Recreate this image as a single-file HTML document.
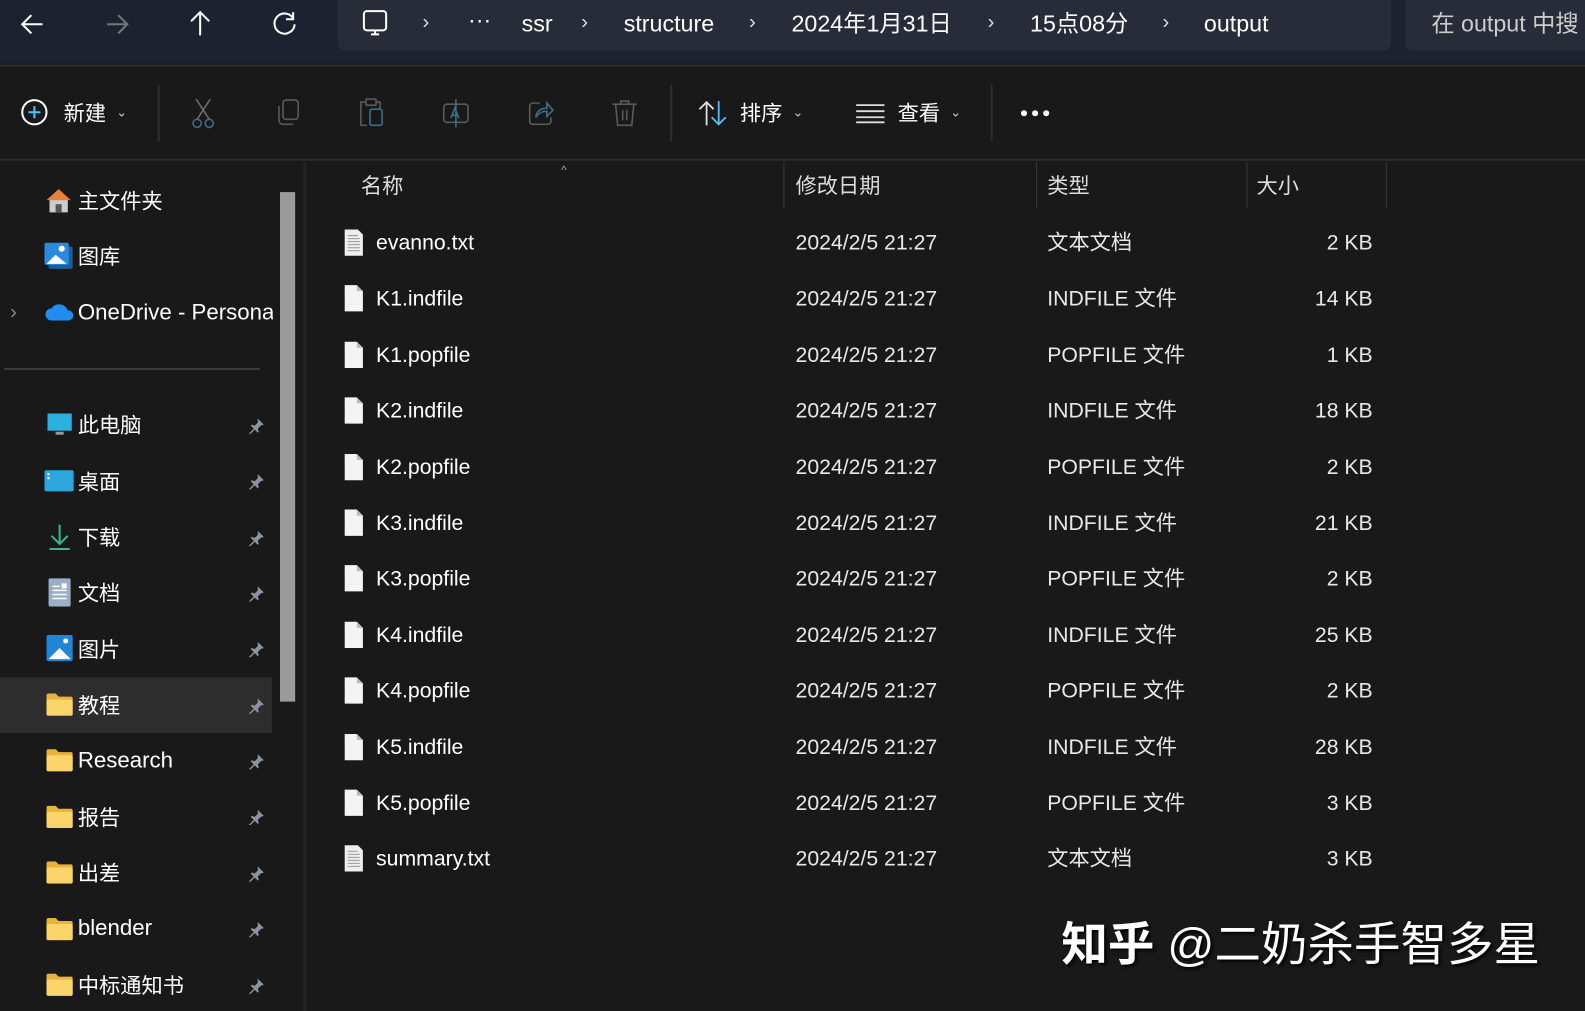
<!DOCTYPE html>
<html><head><meta charset="utf-8"><style>
*{margin:0;padding:0;box-sizing:border-box}
html,body{width:1585px;height:1011px;overflow:hidden;background:#191919}
#w{position:absolute;left:0;top:0;width:1568px;height:1000px;transform:scale(1.01084,1.011);transform-origin:0 0;font-family:"Liberation Sans","Noto Sans CJK SC",sans-serif;color:#fff;background:#191919}
.a{position:absolute;white-space:nowrap;line-height:26px}
.top{position:absolute;left:0;top:0;width:1568px;height:63px;background:#1d2230}
.crumb{position:absolute;left:334px;top:0;width:1042px;height:50px;background:#272c38;border-radius:0 0 8px 8px}
.search{position:absolute;left:1390px;top:0;width:200px;height:50px;background:#272c38;border-radius:0 0 0 8px}
.bc{font-size:23px;top:9px;color:#fff;line-height:28px}
.sep{font-size:20px;top:9px;color:#ddd}
.tb{position:absolute;left:0;top:64px;width:1568px;height:95px;background:#191919;border-top:2px solid #2c2c2c;border-bottom:2px solid #2c2c2c}
.vs{position:absolute;width:2px;background:#2e2e2e}
.side{font-size:21px;color:#fff}
.pin{position:absolute;left:246px;width:16px;height:16px}
.row{font-size:21px;color:#fff}
.dt{font-size:21px;color:#e8e8e8}
.gi{color:#ddd}
</style></head><body><div id="w">
<div class="top"></div>
<div class="crumb"></div>
<div class="search"></div>
<svg class="a" style="left:18px;top:10px" width="28" height="28" viewBox="0 0 28 28" fill="none" stroke="#fff" stroke-width="2"><path d="M24 14H5M13 5l-9 9 9 9"/></svg>
<svg class="a" style="left:102px;top:10px" width="28" height="28" viewBox="0 0 28 28" fill="none" stroke="#777" stroke-width="2"><path d="M4 14h19M15 5l9 9-9 9"/></svg>
<svg class="a" style="left:184px;top:8px" width="28" height="30" viewBox="0 0 28 30" fill="none" stroke="#fff" stroke-width="2"><path d="M14 27V4M5 13l9-9 9 9"/></svg>
<svg class="a" style="left:268px;top:9px" width="28" height="28" viewBox="0 0 28 28" fill="none" stroke="#fff" stroke-width="2"><path d="M22 9a10 10 0 1 0 1.5 6"/><path d="M22 3v7h-7"/></svg>
<svg class="a" style="left:356px;top:8px" width="30" height="30" viewBox="0 0 30 30" fill="none" stroke="#fff" stroke-width="2"><rect x="4" y="3" width="22" height="19" rx="3"/><path d="M11 26h8M15 22v4"/></svg>
<span class="a sep" style="left:418px">›</span>
<span class="a bc" style="left:463px;top:5px">···</span>
<span class="a bc" style="left:516px">ssr</span>
<span class="a sep" style="left:575px">›</span>
<span class="a bc" style="left:617px">structure</span>
<span class="a sep" style="left:741px">›</span>
<span class="a bc" style="left:783px">2024年1月31日</span>
<span class="a sep" style="left:977px">›</span>
<span class="a bc" style="left:1019px">15点08分</span>
<span class="a sep" style="left:1150px">›</span>
<span class="a bc" style="left:1191px">output</span>
<span class="a bc" style="left:1416px;color:#ccc">在 output 中搜</span>
<div class="tb"></div>
<svg class="a" style="left:20px;top:97px" width="28" height="28" viewBox="0 0 28 28" fill="none" stroke-width="2"><circle cx="14" cy="14" r="12" stroke="#fff"/><path d="M14 8v12M8 14h12" stroke="#4cc2ff"/></svg>
<span class="a side" style="left:63px;top:100px">新建</span>
<span class="a" style="left:115px;top:98px;font-size:13px;color:#ccc">⌄</span>
<div class="vs" style="left:156px;top:84px;height:56px"></div>
<svg class="a" style="left:186px;top:96px" width="30" height="32" viewBox="0 0 30 32" fill="none" stroke="#6a6a6a" stroke-width="1.6"><path d="M8 2l13 20M22 2L9 22"/><circle cx="9" cy="26" r="4" stroke="#3e6d87"/><circle cx="21" cy="26" r="4" stroke="#3e6d87"/></svg>
<svg class="a" style="left:270px;top:96px" width="30" height="32" viewBox="0 0 30 32" fill="none" stroke="#5a5a5a" stroke-width="1.6"><rect x="10" y="3" width="15" height="19" rx="3"/><path d="M6 9v14a4 4 0 0 0 4 4h10"/></svg>
<svg class="a" style="left:352px;top:96px" width="30" height="32" viewBox="0 0 30 32" fill="none" stroke="#5a5a5a" stroke-width="1.6"><path d="M9 5H5v23h6"/><path d="M20 5h4v6"/><rect x="10" y="2" width="10" height="6" rx="1"/><rect x="14" y="12" width="12" height="16" rx="2" stroke="#3e6d87"/></svg>
<svg class="a" style="left:436px;top:96px" width="30" height="32" viewBox="0 0 30 32" fill="none" stroke="#5a5a5a" stroke-width="1.6"><rect x="3" y="7" width="24" height="18" rx="3"/><path d="M10 21l4-10 4 10M11 18h6M15 2v28" stroke="#3e6d87"/></svg>
<svg class="a" style="left:520px;top:96px" width="30" height="32" viewBox="0 0 30 32" fill="none" stroke="#5a5a5a" stroke-width="1.6"><path d="M14 6H7a3 3 0 0 0-3 3v15a3 3 0 0 0 3 3h15a3 3 0 0 0 3-3v-4"/><path d="M10 20c1-6 5-9 11-9V6l6 7-6 6v-5c-5 0-8 2-11 6z" stroke="#3e6d87"/></svg>
<svg class="a" style="left:603px;top:96px" width="30" height="32" viewBox="0 0 30 32" fill="none" stroke="#5a5a5a" stroke-width="1.6"><path d="M3 7h24M11 7V4h8v3M6 7l2 21h14l2-21M13 13v10M17 13v10"/></svg>
<div class="vs" style="left:663px;top:84px;height:56px"></div>
<svg class="a" style="left:690px;top:98px" width="32" height="28" viewBox="0 0 32 28" fill="none" stroke-width="1.8"><path d="M9 26V3M2 10l7-7 7 7" stroke="#ddd"/><path d="M21 2v23M14 18l7 7 7-7" stroke="#4cc2ff"/></svg>
<span class="a side" style="left:732px;top:100px">排序</span>
<span class="a" style="left:784px;top:98px;font-size:13px;color:#ccc">⌄</span>
<svg class="a" style="left:846px;top:101px" width="30" height="22" viewBox="0 0 30 22" stroke="#ddd" stroke-width="1.8"><path d="M1 3h28M1 9h28M1 15h28M1 20h28"/></svg>
<span class="a side" style="left:888px;top:100px">查看</span>
<span class="a" style="left:940px;top:98px;font-size:13px;color:#ccc">⌄</span>
<div class="vs" style="left:980px;top:84px;height:56px"></div>
<svg class="a" style="left:1008px;top:107px" width="34" height="10"><circle cx="5" cy="5" r="3" fill="#fff"/><circle cx="16" cy="5" r="3" fill="#fff"/><circle cx="27" cy="5" r="3" fill="#fff"/></svg>
<div class="a" style="left:277px;top:190px;width:15px;height:504px;background:#9a9a9a"></div>
<div class="a" style="left:300px;top:160px;width:3px;height:840px;background:#242424"></div>
<div class="a" style="left:4px;top:364px;width:253px;height:2px;background:#3a3a3a"></div>
<div class="a" style="left:0;top:670px;width:269px;height:55px;background:#2d2d2d"></div>
<svg class="a" style="left:44px;top:185px" width="28" height="26" viewBox="0 0 28 26"><path d="M14 2L2 13h3v12h18V13h3z" fill="#e8803a"/><rect x="5" y="13" width="18" height="12" fill="#ccc"/><rect x="11" y="17" width="6" height="8" fill="#555"/></svg>
<span class="a side" style="left:77px;top:187px">主文件夹</span>
<svg class="a" style="left:44px;top:240px" width="28" height="28" viewBox="0 0 28 28"><rect x="4" y="4" width="24" height="22" rx="2" fill="#1c5d9e"/><rect x="0" y="0" width="24" height="22" rx="2" fill="#2a8ae0"/><path d="M2 21l9-9 11 9z" fill="#fff"/><circle cx="17" cy="6" r="3" fill="#fff"/></svg>
<span class="a side" style="left:77px;top:242px">图库</span>
<span class="a" style="left:10px;top:296px;font-size:20px;color:#888">›</span>
<svg class="a" style="left:44px;top:298px" width="30" height="20" viewBox="0 0 30 20"><path d="M7 19a6 6 0 0 1 0-12 9 9 0 0 1 16 2 5 5 0 0 1 1 10z" fill="#1f8ef0"/></svg>
<span class="a side" style="left:77px;top:296px;width:193px;overflow:hidden;font-size:22px">OneDrive - Personal</span>
<svg class="a" style="left:46px;top:408px" width="26" height="24" viewBox="0 0 26 24"><rect x="1" y="1" width="24" height="17" fill="#2bb0e0"/><rect x="9" y="19" width="8" height="3" fill="#999"/></svg>
<span class="a side" style="left:77px;top:409px">此电脑</span>
<svg class="a" style="left:44px;top:465px" width="29" height="22" viewBox="0 0 29 22"><rect x="0" y="0" width="29" height="21" rx="2" fill="#2ca6dc"/><rect x="3" y="3" width="2" height="2" fill="#fff"/><rect x="3" y="7" width="2" height="2" fill="#fff"/></svg>
<span class="a side" style="left:77px;top:465px">桌面</span>
<svg class="a" style="left:47px;top:518px" width="24" height="26" viewBox="0 0 24 26" fill="none" stroke="#3bb58a" stroke-width="2"><path d="M12 1v18M4 12l8 8 8-8M2 25h20"/></svg>
<span class="a side" style="left:77px;top:520px">下载</span>
<svg class="a" style="left:48px;top:572px" width="22" height="28" viewBox="0 0 22 28"><rect x="0" y="0" width="22" height="28" rx="2" fill="#9aaec8"/><path d="M4 8h7M4 12h14M4 16h14M4 20h14" stroke="#fff" stroke-width="1.5"/><rect x="13" y="5" width="5" height="5" fill="#fff"/></svg>
<span class="a side" style="left:77px;top:575px">文档</span>
<svg class="a" style="left:46px;top:628px" width="26" height="26" viewBox="0 0 26 26"><rect width="26" height="26" rx="2" fill="#1f86d6"/><path d="M2 24l11-11 11 11z" fill="#fff"/><circle cx="19" cy="6" r="2.5" fill="#fff"/></svg>
<span class="a side" style="left:77px;top:631px">图片</span>
<svg width="0" height="0" style="position:absolute"><defs>
<g id="fold"><path d="M0 2a2 2 0 0 1 2-2h7l3 3h12a2 2 0 0 1 2 2v15a2 2 0 0 1-2 2H2a2 2 0 0 1-2-2z" fill="#e8b33a"/><rect x="0" y="6" width="26" height="16" rx="2" fill="#fbd46b"/></g>
<g id="pin"><path d="M9 1l6 6-3 1-3 3 1 3-1 1-3-3-5 5-1-1 5-5-3-3 1-1 3 1 3-3z" fill="#8a94a0"/></g>
<g id="txt"><path d="M1 1h13l5 5v21H1z" fill="#eee"/><path d="M4 7h10M4 10h12M4 13h12M4 16h12M4 19h12M4 22h12" stroke="#999" stroke-width="1"/></g>
<g id="doc"><path d="M1 1h12l6 6v20H1z" fill="#f4f4f4"/><path d="M13 1v6h6z" fill="#bbb"/></g>
</defs></svg>
<svg class="a" style="left:46px;top:686px" width="26" height="22"><use href="#fold"/></svg>
<span class="a side" style="left:77px;top:686px">教程</span>
<svg class="a" style="left:46px;top:741px" width="26" height="22"><use href="#fold"/></svg>
<span class="a side" style="left:77px;top:739px;font-size:22px">Research</span>
<svg class="a" style="left:46px;top:797px" width="26" height="22"><use href="#fold"/></svg>
<span class="a side" style="left:77px;top:797px">报告</span>
<svg class="a" style="left:46px;top:852px" width="26" height="22"><use href="#fold"/></svg>
<span class="a side" style="left:77px;top:852px">出差</span>
<svg class="a" style="left:46px;top:908px" width="26" height="22"><use href="#fold"/></svg>
<span class="a side" style="left:77px;top:905px;font-size:22px">blender</span>
<svg class="a" style="left:46px;top:963px" width="26" height="22"><use href="#fold"/></svg>
<span class="a side" style="left:77px;top:963px">中标通知书</span>
<svg class="pin" style="top:413px"><use href="#pin"/></svg>
<svg class="pin" style="top:468px"><use href="#pin"/></svg>
<svg class="pin" style="top:524px"><use href="#pin"/></svg>
<svg class="pin" style="top:579px"><use href="#pin"/></svg>
<svg class="pin" style="top:634px"><use href="#pin"/></svg>
<svg class="pin" style="top:690px"><use href="#pin"/></svg>
<svg class="pin" style="top:745px"><use href="#pin"/></svg>
<svg class="pin" style="top:800px"><use href="#pin"/></svg>
<svg class="pin" style="top:856px"><use href="#pin"/></svg>
<svg class="pin" style="top:911px"><use href="#pin"/></svg>
<svg class="pin" style="top:967px"><use href="#pin"/></svg>
<span class="a" style="left:555px;top:155px;font-size:12px;color:#aaa">^</span>
<span class="a dt gi" style="left:357px;top:172px">名称</span>
<div class="a" style="left:775px;top:160px;width:1px;height:46px;background:#3a3a3a"></div>
<span class="a dt gi" style="left:787px;top:172px">修改日期</span>
<div class="a" style="left:1025px;top:160px;width:1px;height:46px;background:#3a3a3a"></div>
<span class="a dt gi" style="left:1036px;top:172px">类型</span>
<div class="a" style="left:1233px;top:160px;width:1px;height:46px;background:#3a3a3a"></div>
<span class="a dt gi" style="left:1243px;top:172px">大小</span>
<div class="a" style="left:1371px;top:160px;width:1px;height:46px;background:#3a3a3a"></div>
<div id="rows"></div>
<span class="a" style="left:1050px;top:908px;line-height:52px;font-size:46px;color:#fff;text-shadow:2px 2px 3px #000;font-weight:bold">知乎 <span style="font-weight:normal">@二奶杀手智多星</span></span>
</div>
<script>
var d=[["evanno.txt","文本文档","2 KB",1],["K1.indfile","INDFILE 文件","14 KB"],["K1.popfile","POPFILE 文件","1 KB"],["K2.indfile","INDFILE 文件","18 KB"],["K2.popfile","POPFILE 文件","2 KB"],["K3.indfile","INDFILE 文件","21 KB"],["K3.popfile","POPFILE 文件","2 KB"],["K4.indfile","INDFILE 文件","25 KB"],["K4.popfile","POPFILE 文件","2 KB"],["K5.indfile","INDFILE 文件","28 KB"],["K5.popfile","POPFILE 文件","3 KB"],["summary.txt","文本文档","3 KB",1]];
var h="";d.forEach(function(r,i){var y=240+i*55.4;
h+='<svg class="a" style="left:340px;top:'+(y-14)+'px" width="20" height="28"><use href="#'+(r[3]?'txt':'doc')+'"/></svg>';
h+='<span class="a row" style="left:372px;top:'+(y-12)+'px">'+r[0]+'</span>';
h+='<span class="a dt" style="left:787px;top:'+(y-12)+'px">2024/2/5 21:27</span>';
h+='<span class="a dt" style="left:1036px;top:'+(y-12)+'px">'+r[1]+'</span>';
h+='<span class="a dt" style="right:'+(1568-1358)+'px;top:'+(y-12)+'px">'+r[2]+'</span>';});
document.getElementById("rows").innerHTML=h;
</script>
</body></html>
